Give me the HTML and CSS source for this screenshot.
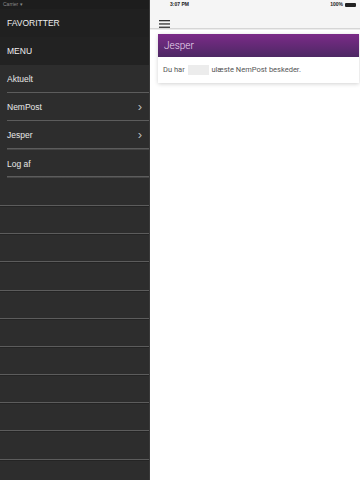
FILE: index.html
```html
<!DOCTYPE html>
<html lang="da">
<head>
  <meta charset="UTF-8">
  <meta name="viewport" content="width=device-width, initial-scale=1.0">
  <title>NemPost</title>
  <link rel="stylesheet" href="styles.css">
</head>
<body>
  <div class="screen">
    <aside class="sidebar">
      <div class="status-left">Carrier <span class="wifi">&#x25BE;</span></div>
      <div class="section">FAVORITTER</div>
      <div class="section menu">MENU</div>
      <ul class="items">
        <li class="item inset">Aktuelt</li>
        <li class="item inset">NemPost <span class="chev">&#x203A;</span></li>
        <li class="item inset">Jesper <span class="chev">&#x203A;</span></li>
        <li class="item inset">Log af</li>
        <li class="item"></li>
        <li class="item"></li>
        <li class="item"></li>
        <li class="item"></li>
        <li class="item"></li>
        <li class="item"></li>
        <li class="item"></li>
        <li class="item"></li>
        <li class="item"></li>
        <li class="item"></li>
        <li class="item"></li>
      </ul>
    </aside>
    <main class="main">
      <div class="status-right">
        <span class="time">3:07 PM</span>
        <span class="battery">100% <span class="batt"></span></span>
      </div>
      <div class="navbar">
        <svg width="11" height="8" viewBox="0 0 11 8"><rect y="0" width="11" height="1.3" fill="#333"/><rect y="3.3" width="11" height="1.3" fill="#333"/><rect y="6.6" width="11" height="1.3" fill="#333"/></svg>
      </div>
      <div class="content">
        <div class="card">
          <div class="card-head">Jesper</div>
          <div class="card-body">Du har <span class="blank"></span> ulæste NemPost beskeder.</div>
        </div>
      </div>
    </main>
  </div>
</body>
</html>
```

FILE: styles.css
```css
* {
  box-sizing: border-box;
}
body {
  margin: 0;
  font-family: "Liberation Sans", Arial, sans-serif;
  background: #fff;
}
.screen {
  display: flex;
  width: 360px;
  height: 480px;
  overflow: hidden;
}
.sidebar {
  width: 150px;
  flex-shrink: 0;
  background: #2d2d2d;
  border-right: 1px solid #3a3a3a;
  color: #fff;
}
.status-left {
  height: 9px;
  background: #1d1d1d;
  color: #8a8a8a;
  font-size: 5px;
  line-height: 9px;
  padding-left: 3px;
}
.wifi {
  font-size: 5px;
}
.section {
  height: 28px;
  line-height: 28px;
  background: #202020;
  font-size: 8.5px;
  padding-left: 7px;
  color: #eee;
}
.section.menu {
  background: #222;
}
.items {
  list-style: none;
  margin: 0;
  padding: 0;
}
.item {
  position: relative;
  height: 28.2px;
  line-height: 28px;
  font-size: 8.5px;
  color: #e8e8e8;
  padding-left: 7px;
  border-bottom: 1.5px solid #5c5c5c;
  box-shadow: 0 1px 0 #242424;
}
.item.inset {
  border-bottom: none;
  box-shadow: none;
  background: linear-gradient(#5c5c5c, #5c5c5c) no-repeat 7px 100% / 100% 1.5px;
}
.chev {
  position: absolute;
  right: 7px;
  top: 0;
  color: #bbb;
  font-size: 13px;
  line-height: 27px;
}
.main {
  flex: 1;
  display: flex;
  flex-direction: column;
}
.status-right {
  position: relative;
  height: 9px;
  background: #f5f5f5;
  font-size: 5px;
  font-weight: bold;
  color: #222;
  line-height: 9px;
}
.time {
  position: absolute;
  left: 20px;
}
.battery {
  position: absolute;
  right: 4px;
  display: flex;
  align-items: center;
  gap: 2px;
  height: 9px;
}
.batt {
  display: inline-block;
  width: 11px;
  height: 4px;
  background: #222;
  border-radius: 1px;
}
.navbar {
  height: 20px;
  background: #f5f5f5;
  border-bottom: 1px solid #d6d6d6;
  box-shadow: 0 1px 0 #ececec;
  padding: 5px 0 0 9px;
}
.content {
  padding: 5px 1px 0 8px;
}
.card {
  background: #fff;
  box-shadow: 0 1px 4px rgba(0, 0, 0, 0.18);
}
.card-head {
  height: 23px;
  line-height: 23px;
  padding-left: 6px;
  font-family: Roboto, "Liberation Sans", sans-serif;
  font-weight: 300;
  font-size: 10px;
  color: #eedcf3;
  background: linear-gradient(#7b2b88, #4d2864);
}
.card-body {
  height: 26px;
  line-height: 26px;
  padding-left: 5px;
  font-family: Roboto, "Liberation Sans", sans-serif;
  font-size: 7.5px;
  color: #555;
}
.blank {
  display: inline-block;
  width: 21px;
  height: 10px;
  background: #ececec;
  vertical-align: middle;
  margin: 0 1px;
}
```
